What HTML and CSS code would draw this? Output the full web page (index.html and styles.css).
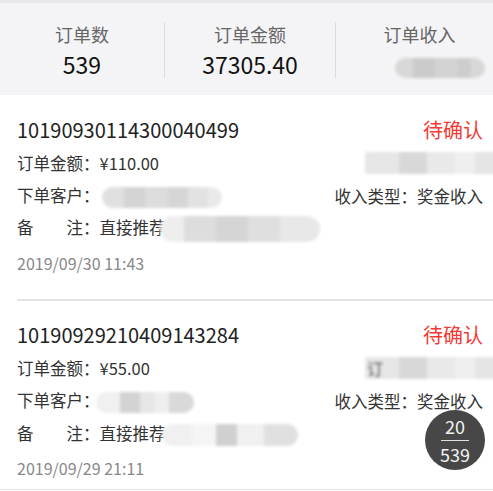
FILE: index.html
```html
<!doctype html>
<html>
<head>
	<meta charset="utf-8">
	<meta name="viewport" content="width=device-width, initial-scale=1.0">
	<title>订单列表</title>
	<link rel="stylesheet" href="styles.css">
</head>
<body>

	<div class="page">
		<div class="summary">
			<div class="stat">
				<div class="stat-label">订单数</div>
				<div class="stat-value">539</div>
			</div>
			<div class="stat">
				<div class="stat-label">订单金额</div>
				<div class="stat-value">37305.40</div>
			</div>
			<div class="stat">
				<div class="stat-label">订单收入</div>
				<div class="stat-value"><span class="mask mask-total"></span></div>
			</div>
		</div>

		<ul class="orders">
			<li class="order">
				<div class="row row-head"><span class="order-no">10190930114300040499</span><span class="status">待确认</span></div>
				<div class="row"><span>订单金额：¥110.00</span><span class="mask mask-income"></span></div>
				<div class="row"><span>下单客户：<span class="mask mask-user"></span></span><span>收入类型：奖金收入</span></div>
				<div class="row"><span>备　　注：直接推荐<span class="mask mask-note"></span></span></div>
				<div class="row row-date">2019/09/30 11:43</div>
			</li>
			<li class="order">
				<div class="row row-head"><span class="order-no">10190929210409143284</span><span class="status">待确认</span></div>
				<div class="row"><span>订单金额：¥55.00</span><span class="mask mask-income">订</span></div>
				<div class="row"><span>下单客户：<span class="mask mask-user short"></span></span><span>收入类型：奖金收入</span></div>
				<div class="row"><span>备　　注：直接推荐<span class="mask mask-note short"></span></span></div>
				<div class="row row-date">2019/09/29 21:11</div>
			</li>
		</ul>

		<div class="tabbar"></div>

		<div class="pager">
			<span>20</span>
			<i class="pager-line"></i>
			<span>539</span>
		</div>
	</div>

</body>
</html>
```

FILE: styles.css
```css
* {box-sizing:border-box;}
html, body {margin:0; padding:0; background:#fff; overflow:hidden;}
body {font-family:"Noto Sans CJK SC","Noto Sans",sans-serif; color:#333;}

.page {position:relative; width:493px; height:100vh; display:flex; flex-direction:column; overflow:hidden;}

/* summary bar */
.summary {display:grid; grid-template-columns:165px 171px 167px; width:503px; flex:none; height:95px; padding:19px 0 17px; background:#f4f4f6; border-top:3px solid #e8e8ea;}
.stat {text-align:center; border-right:1px solid #dcdcdc;}
.stat:last-child {border-right:0;}
.stat-label {font-size:18px; line-height:24px; color:#666;}
.stat-value {font-size:23px; line-height:28px; padding-top:4px; color:#111;}

/* list */
.orders {flex:1; margin:0; padding:1px 0 0; list-style:none; overflow:hidden;}
.order {margin-left:17px; padding:16px 10px 18px 0; border-bottom:2px solid #e4e4e4;}
.row {display:flex; justify-content:space-between; align-items:center; height:33px; font-size:16.5px; color:#333; white-space:nowrap;}
.row-head {height:34px;}
.order-no {font-size:20px; color:#222;}
.status {font-size:20px; color:#f23a33;}
.row-date {height:36px; font-size:16px; color:#888;}

/* blurred private data */
.mask {display:inline-block; vertical-align:middle; height:21px; border-radius:11px; filter:blur(1.5px); background:linear-gradient(90deg, #e0e0e0 0 18%, #d4d4d4 18% 36%, #dcdcdc 36% 55%, #d6d6d6 55% 72%, #e2e2e2 72% 88%, #eaeaea 88%);}
.mask-total {width:90px; height:20px; margin-left:40px; background:linear-gradient(90deg, #d8d8d8 0 20%, #cbcbcb 20% 45%, #d2d2d2 45% 70%, #cdcdcd 70% 85%, #d8d8d8 85%);}
.mask-income {width:138px; height:22px; margin-right:-20px; border-radius:2px 0 0 2px; font-size:16px; line-height:22px; color:#555; padding-left:2px; background:linear-gradient(90deg, #e6e6e6 0 25%, #d8d8d8 25% 45%, #e9e9e9 45% 65%, #efefef 65% 80%, #e5e5e5 80%);}
.mask-user {width:120px; margin-left:2px;}
.mask-user.short {width:98px; margin-left:-4px; background:linear-gradient(90deg, #f0f0f0 0 25%, #d3d3d3 25% 45%, #e6e6e6 45% 60%, #eeeeee 60% 75%, #d9d9d9 75%);}
.mask-note {width:160px; height:26px; margin-left:-6px; border-radius:13px; background:linear-gradient(90deg, #eeeeee 0 15%, #dddddd 15% 35%, #d5d5d5 35% 55%, #dfdfdf 55% 75%, #e8e8e8 75%);}
.mask-note.short {width:136px; height:22px; margin-left:-4px; background:linear-gradient(90deg, #f0f0f0 0 22%, #f5f5f5 22% 40%, #d0d0d0 40% 55%, #f0f0f0 55% 75%, #e0e0e0 75%);}

.tabbar {flex:none; height:2px; border-top:1px solid #e6e6e6; background:#fff;}

/* floating page counter */
.pager {position:absolute; left:425px; top:410px; width:60px; height:60px; border-radius:50%; background:#474747; color:#f2f2f2; display:flex; flex-direction:column; align-items:center; justify-content:center; font-size:18px;}
.pager span {line-height:21px;}
.pager-line {display:block; width:28px; height:1px; margin:3px 0; background:#e0e0e0;}
```
